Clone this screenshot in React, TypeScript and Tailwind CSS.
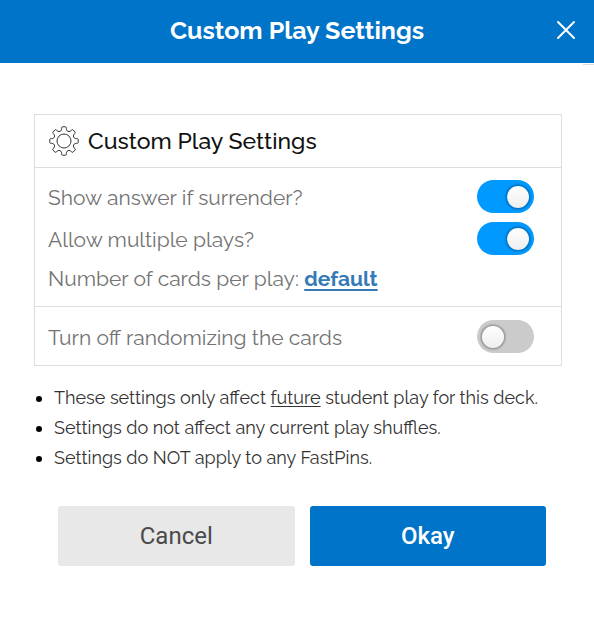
import { useState } from "react";

const point = (radius: number, degrees: number) => {
  const a = (degrees * Math.PI) / 180;
  return `${(15 + radius * Math.sin(a)).toFixed(2)} ${(15 - radius * Math.cos(a)).toFixed(2)}`;
};

// Outline of an eight-toothed cog with rounded tips and rounded valleys.
const cogPath =
  Array.from({ length: 8 }, (_, i) => {
    const a = i * 45;
    return [
      `${i === 0 ? "M" : "L"}${point(12.8, a - 10.5)}`,
      `Q${point(14.4, a - 10)} ${point(14.3, a - 6)}`,
      `L${point(14.3, a + 6)}`,
      `Q${point(14.4, a + 10)} ${point(12.8, a + 10.5)}`,
      `Q${point(11.2, a + 12)} ${point(10.7, a + 17)}`,
      `Q${point(10.1, a + 22.5)} ${point(10.7, a + 28)}`,
      `Q${point(11.2, a + 33)} ${point(12.8, a + 34.5)}`,
    ].join("");
  }).join("") + "Z";

function CogIcon() {
  return (
    <svg viewBox="0 0 30 30" className="size-[30px] shrink-0" fill="none" stroke="#333333" aria-hidden="true">
      <path d={cogPath} strokeLinejoin="round" />
      <circle cx="15" cy="15" r="7" />
    </svg>
  );
}

function Toggle({ id, initial }: { id: string; initial: boolean }) {
  const [on, setOn] = useState(initial);
  return (
    <input
      id={id}
      type="checkbox"
      role="switch"
      checked={on}
      onChange={(e) => setOn(e.target.checked)}
      className="flex h-[33px] w-[57px] shrink-0 cursor-pointer appearance-none items-center rounded-full bg-[#cbcbcb] px-1 before:size-6 before:rounded-full before:border before:border-black/20 before:bg-linear-to-b before:from-white before:to-[#eeeeee] before:bg-clip-padding before:shadow-[0_0_2px_rgba(0,0,0,0.5)] before:content-[''] checked:justify-end checked:bg-[#0099ff]"
    />
  );
}

function SettingRow({ id, label, initial }: { id: string; label: string; initial: boolean }) {
  return (
    <div className="flex items-center justify-between">
      <label htmlFor={id} className="pt-[2px] leading-[30px]">{label}</label>
      <Toggle id={id} initial={initial} />
    </div>
  );
}

export default function App() {
  return (
    <div className="min-h-screen bg-white font-[Raleway,Lato,sans-serif] text-black">
      <header className="grid h-[63px] grid-cols-[1fr_auto_1fr] items-center bg-[#0074c8] text-white">
        <h1 className="col-start-2 pb-1 text-[25px] leading-8 font-bold">Custom Play Settings</h1>
        <button type="button" aria-label="Close" className="mr-[18px] cursor-pointer justify-self-end pb-1">
          <svg viewBox="0 0 20 20" className="size-5" fill="none" stroke="currentColor" strokeWidth="2" strokeLinecap="round" aria-hidden="true">
            <path d="M2 2L18 18M18 2L2 18" />
          </svg>
        </button>
      </header>
      <div className="mt-px ml-auto h-px w-[11px] bg-[#dddddd]" />

      <main className="pt-[49px] pr-8 pl-[34px]">
        <section className="border border-[#dddddd] text-[21px] leading-8 text-[#737373]">
          <div className="flex h-[53px] items-center gap-[9px] border-b border-[#dddddd] px-[14px] text-[#111111]">
            <CogIcon />
            <h2 className="text-[23px] font-medium">Custom Play Settings</h2>
          </div>
          <div className="flex flex-col gap-[9px] border-b border-[#dddddd] pt-3 pr-[27px] pb-3 pl-[13px]">
            <SettingRow id="show-answer" label="Show answer if surrender?" initial={true} />
            <SettingRow id="multiple-plays" label="Allow multiple plays?" initial={true} />
            <p className="leading-[30px]">
              Number of cards per play:{" "}
              <a href="#cards" className="font-bold text-[#337ab7] underline decoration-2 underline-offset-3">
                default
              </a>
            </p>
          </div>
          <div className="pt-[13px] pr-[27px] pb-3 pl-[13px]">
            <SettingRow id="no-random" label="Turn off randomizing the cards" initial={false} />
          </div>
        </section>

        <ul className="mt-[17px] list-disc pl-5 text-[18px] leading-[30px] font-normal text-[#333333] marker:text-black">
          <li>
            These settings only affect <u className="underline-offset-2">future</u> student play for this deck.
          </li>
          <li>Settings do not affect any current play shuffles.</li>
          <li>Settings do NOT apply to any FastPins.</li>
        </ul>

        <div className="mt-[33px] grid grid-cols-2 gap-[15px] pr-4 pl-6 font-[Roboto,sans-serif] text-2xl">
          <button type="button" className="h-[60px] cursor-pointer rounded-[3px] bg-[#e8e8e8] text-[#4a4a4a]">
            Cancel
          </button>
          <button type="button" className="h-[60px] cursor-pointer rounded-[3px] bg-[#0074c8] font-medium text-white">
            Okay
          </button>
        </div>
      </main>
    </div>
  );
}
